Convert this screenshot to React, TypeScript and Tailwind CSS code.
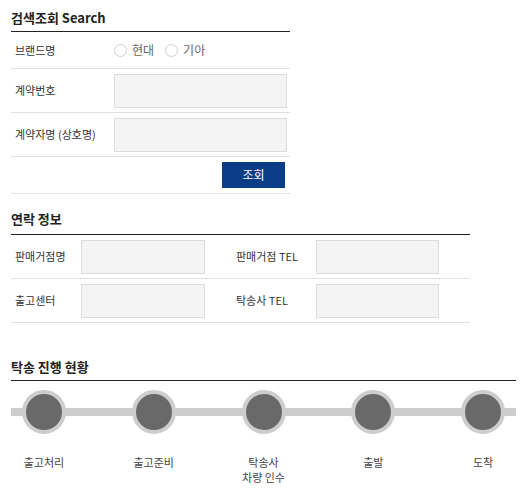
import React from 'react';

const steps = [
  { id: 'release', label: ['출고처리'] },
  { id: 'ready', label: ['출고준비'] },
  { id: 'pickup', label: ['탁송사', '차량 인수'] },
  { id: 'depart', label: ['출발'] },
  { id: 'arrive', label: ['도착'] },
];

function Field({ className = '' }: { className?: string }) {
  return <div className={`h-[34px] bg-[#f4f4f4] border border-[#dcdcdc] ${className}`} />;
}

function Radio({ label }: { label: string }) {
  return (
    <label className="flex items-center gap-[5px] mr-[11px]">
      <span className="w-[13px] h-[13px] rounded-full border border-[#d0d0d0] bg-white" />
      <span className="text-[12px] text-[#666]">{label}</span>
    </label>
  );
}

export default function App() {
  return (
    <div className="min-h-screen bg-white pl-[11px] font-['Noto_Sans_CJK_KR','Noto_Sans',sans-serif] text-[#333]">
      {/* 검색조회 */}
      <section className="w-[279px]">
        <h2 className="pt-[9px] pb-[4px] leading-[18px] text-[13px] font-bold text-[#222] border-b border-[#222]">
          검색조회 Search
        </h2>
        <div className="h-[37px] flex items-center border-b border-[#e0e0e0]">
          <div className="w-[103px] pl-[4px] text-[11px]">브랜드명</div>
          <Radio label="현대" />
          <Radio label="기아" />
        </div>
        <div className="h-[44px] flex items-center border-b border-[#e0e0e0]">
          <div className="w-[103px] pl-[4px] text-[11px]">계약번호</div>
          <Field className="w-[173px]" />
        </div>
        <div className="h-[44px] flex items-center border-b border-[#e0e0e0]">
          <div className="w-[103px] pl-[4px] text-[11px]">계약자명 (상호명)</div>
          <Field className="w-[173px]" />
        </div>
        <div className="h-[37px] flex items-center justify-end pr-[5px] border-b border-[#e0e0e0]">
          <button className="w-[63px] h-[26px] bg-[#0b3d86] text-white text-[12px]">조회</button>
        </div>
      </section>

      {/* 연락 정보 */}
      <section className="w-[459px] pt-[16px]">
        <h2 className="pb-[6px] leading-[18px] text-[13px] font-bold text-[#222] border-b border-[#222]">
          연락 정보
        </h2>
        {[
          ['판매거점명', '판매거점 TEL'],
          ['출고센터', '탁송사 TEL'],
        ].map(([a, b]) => (
          <div key={a} className="h-[44px] flex items-center border-b border-[#e0e0e0]">
            <div className="w-[70px] pl-[4px] text-[11px]">{a}</div>
            <Field className="w-[124px]" />
            <div className="w-[84px] ml-[27px] pl-[4px] text-[11px]">{b}</div>
            <Field className="w-[123px]" />
          </div>
        ))}
      </section>

      {/* 탁송 진행 현황 */}
      <section className="w-[505px] pt-[35px]">
        <h2 className="pb-[4px] leading-[18px] text-[13px] font-bold text-[#222] border-b border-[#222]">
          탁송 진행 현황
        </h2>
        <div className="relative mt-[9px]">
          <div className="absolute left-0 right-0 top-[18px] h-[8px] bg-[#cdcdcd]" />
          <div className="relative flex justify-between px-[11px]">
            {steps.map((s) => (
              <div key={s.id} className="w-[44px] flex flex-col items-center">
                <div className="w-[44px] h-[44px] rounded-full border-4 border-[#cdcdcd] bg-[#696969]" />
                <div className="mt-[21px] whitespace-nowrap text-center text-[11px] leading-[15px] text-[#444]">
                  {s.label.map((l) => (
                    <div key={l}>{l}</div>
                  ))}
                </div>
              </div>
            ))}
          </div>
        </div>
      </section>
    </div>
  );
}
